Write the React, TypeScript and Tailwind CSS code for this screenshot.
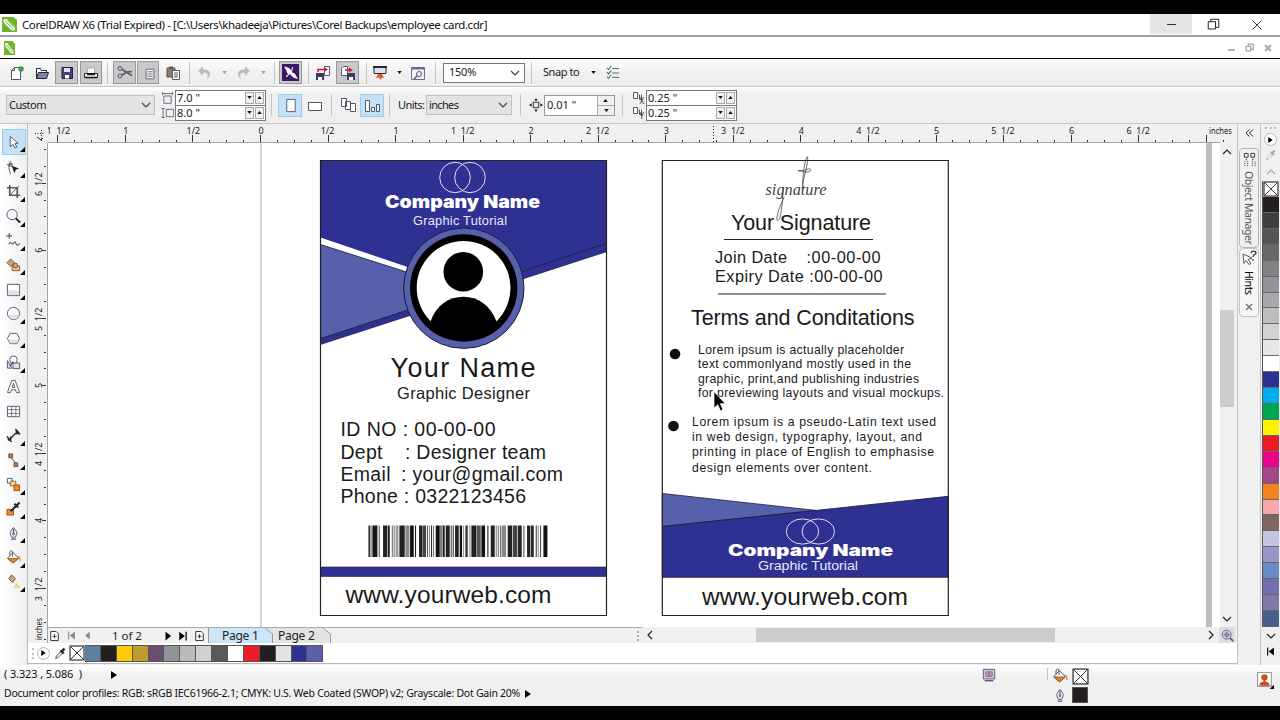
import React from 'react';

interface IconProps {
  children: React.ReactNode;
  className?: string;
}

const Icon: React.FC<IconProps> = ({ children, className = 'h-4 w-4' }) => (
  <svg viewBox="0 0 16 16" fill="none" stroke="#55556a" strokeWidth="1" className={`shrink-0 ${className}`}>
    {children}
  </svg>
);

const Cell: React.FC<IconProps> = ({ children, className = '' }) => (
  <div className={`flex h-[23px] shrink-0 items-center justify-center ${className}`}>{children}</div>
);

const Separator: React.FC<{ className?: string }> = ({ className = 'h-[22px]' }) => (
  <div className={`w-px shrink-0 bg-[#c4c4c4] ${className}`} />
);

const DropArrow: React.FC<{ color?: string }> = ({ color = '#111' }) => (
  <svg viewBox="0 0 6 4" className="h-[3px] w-[5px]">
    <path d="M0 0h6L3 4z" fill={color} />
  </svg>
);

const Chevron: React.FC<{ className?: string; color?: string }> = ({ className = '', color = '#444' }) => (
  <svg viewBox="0 0 10 10" className={`h-[10px] w-[10px] shrink-0 ${className}`}>
    <path d="M1 3l4 4 4-4" fill="none" stroke={color} strokeWidth="1.2" />
  </svg>
);

const CorelLogo: React.FC<{ className: string }> = ({ className }) => (
  <svg viewBox="0 0 16 16" preserveAspectRatio="none" className={className}>
    <path d="M0 0h12l4 3v13H0z" fill="#6cb52d" />
    <path d="M1.500 2l4 .5 8 8 .5 4-4-.5-8-8z" fill="#f1f9e8" />
    <path d="M3.500 4.500l8 8M5.500 3.500l7 7" stroke="#5c9d27" strokeWidth=".8" />
  </svg>
);

const PaintBucket = () => (
  <>
    <path d="M1.500 9l6-6.500 6 6.500-6 5z" fill="#fff" />
    <path d="M2 9h11l-5.500 4.700z" fill="#d9852c" stroke="#a96520" />
    <path d="M7 7V2c0-1.500-3-1.500-3 1v3" />
    <path d="M12.500 7c2 0 2.500 2 2.500 5" stroke="#e0983c" strokeWidth="1.500" />
  </>
);

const PenNib = () => (
  <>
    <path d="M8 1.500C6 4 4.500 6 4.500 8l1.500 4h4l1.500-4C11.500 6 10 4 8 1.500z" fill="#f4f4fb" />
    <path d="M8 3v5M5.500 14h5" strokeWidth="1.300" />
    <circle cx="8" cy="8.500" r="1" />
  </>
);

const Eyedropper: React.FC<{ color?: string }> = ({ color = '#26263c' }) => (
  <>
    <path d="M2 14l1-3 5-5 2 2-5 5z" stroke={color} fill="#fff" />
    <path d="M8 4l4 4M9 6l4-4" stroke={color} strokeWidth="3" />
  </>
);

const SpinPair = () => (
  <div className="flex gap-px pr-px">
    <span className="flex h-[12px] w-[9px] items-center justify-center border border-[#aaa] bg-[#f0f0f0]"><DropArrow /></span>
    <span className="flex h-[12px] w-[9px] rotate-180 items-center justify-center border border-[#aaa] bg-[#f0f0f0]"><DropArrow /></span>
  </div>
);

const DoubleInput: React.FC<{ top: string; bottom: string }> = ({ top, bottom }) => (
  <div className="flex h-[31px] w-[91px] shrink-0 flex-col border border-[#777] bg-white text-[11px]">
    <div className="flex flex-1 items-center justify-between border-b border-[#777] pl-px leading-none">{top}<SpinPair /></div>
    <div className="flex flex-1 items-center justify-between pl-px leading-none">{bottom}<SpinPair /></div>
  </div>
);

const CutGlyph = () => (
  <Icon>
    <circle cx="3" cy="3.500" r="2" />
    <circle cx="3" cy="11" r="2" />
    <path d="M5 4.500l10 6M5 10l5-3 5-.5" strokeWidth="1.600" />
  </Icon>
);

const TitleBar = () => (
  <div className="flex h-[23px] items-center border-b-2 border-[#a0a0a0] bg-white">
    <CorelLogo className="ml-[2px] h-[15px] w-[15px]" />
    <span className="ml-[5px] text-[11.500px] tracking-[-0.410px] whitespace-pre text-[#111]">
      {'CorelDRAW X6 (Trial Expired) - [C:\\Users\\khadeeja\\Pictures\\Corel Backups\\employee card.cdr]'}
    </span>
    <div className="ml-auto flex h-full items-center">
      <div className="flex h-[20px] w-[42px] items-center justify-center self-start bg-[#e5e5e5]"><span className="h-px w-[9px] bg-[#333]" /></div>
      <Icon className="ml-[15px] h-[13px] w-[13px]">
        <path d="M1.500 4.500h9v9h-9zM4.500 4.500v-3h10v10h-4" stroke="#222" strokeWidth="1.200" />
      </Icon>
      <Icon className="mr-[18px] ml-[32px] h-[10px] w-[10px]"><path d="M1 1l14 14M15 1L1 15" stroke="#222" strokeWidth="1.500" /></Icon>
    </div>
  </div>
);

const MenuBar = () => (
  <div className="flex h-[22px] items-center border-b border-black bg-white">
    <CorelLogo className="ml-[4px] h-[14px] w-[11px]" />
    <div className="mr-[8px] ml-auto flex items-center gap-[10px]">
      <span className="mt-[5px] h-[2px] w-[7px] bg-[#b5b5b5]" />
      <Icon className="h-[9px] w-[9px]"><path d="M2 6h8v8H2zM6 6V2h9v9h-5" stroke="#aaa" strokeWidth="2.500" /></Icon>
      <Icon className="h-[8px] w-[8px]"><path d="M2 2l12 12M14 2L2 14" stroke="#aaa" strokeWidth="4" /></Icon>
    </div>
  </div>
);

const StandardBar = () => (
  <div className="flex h-[28px] items-center border-b border-[#c8c8c8] bg-gradient-to-b from-white via-[#f0f0f0] to-[#eee] pl-[5px] text-[11px]">
    <Cell className="w-6">
      <Icon><path d="M2.500 5.500l3-3h6v12h-9zM2.500 5.500h3v-3" fill="#fff" /><circle cx="12" cy="4" r="2.800" fill="#3f9b4a" stroke="none" /></Icon>
    </Cell>
    <Cell className="ml-px w-6">
      <Icon><path d="M2.500 13.500v-10h4l1 2h5v2" fill="#fff" stroke="#23233a" /><path d="M2.500 13.500l2-6h10l-2 6z" fill="#7c84a8" stroke="#23233a" /></Icon>
    </Cell>
    <Cell className="ml-px w-[23px] border border-[#999] bg-[#c9c9c9]">
      <Icon><path d="M3 2.500h10.500v11H3z" fill="#43437a" stroke="#1e1e48" /><path d="M5 3h6v4H5z" fill="#dfe0f3" stroke="none" /><path d="M6 10h4v3.500H6z" fill="#fff" stroke="none" /></Icon>
    </Cell>
    <Cell className="ml-[2px] w-[22px] border border-[#999] bg-[#c9c9c9]">
      <Icon><path d="M4.500 3h7v6h-7z" fill="#fff" stroke="#aaa" /><path d="M1.500 8.500h13v4h-13z" fill="#fff" stroke="#222" /><path d="M2 12.500h12M4 9.500h8" stroke="#111" strokeWidth="1.500" /></Icon>
    </Cell>
    <Separator className="ml-[5px] h-[22px]" />
    <Cell className="ml-[5px] w-[23px] border border-[#999] bg-[#c9c9c9]"><CutGlyph /></Cell>
    <Cell className="ml-px w-[22px] border border-[#999] bg-[#c9c9c9]">
      <Icon className="mt-[3px] ml-[4px] h-[14px] w-[14px]"><path d="M3.500 2.500h9v11h-9z" fill="#fff" /><path d="M5 5.500h6M5 8h6M5 10.500h6" /></Icon>
    </Cell>
    <Cell className="ml-[3px] w-[22px]">
      <Icon><path d="M2 3h8v9H2z" fill="#8c7b67" stroke="#5c5148" /><path d="M4 2.500h4" strokeWidth="2" /><path d="M7.500 5.500h7v9h-7z" fill="#fff" /><path d="M9 8h4M9 10h4M9 12h4" /></Icon>
    </Cell>
    <Separator className="ml-[5px] h-[22px]" />
    <Cell className="ml-[4px] w-[22px]">
      <Icon><path d="M6 1L1 6l5 5V8c4-1 6 1 4 6 5-4 4-10-4-9.500z" fill="#bcbcbc" stroke="none" /></Icon>
    </Cell>
    <Cell className="ml-[3px] w-[10px]"><DropArrow color="#999" /></Cell>
    <Cell className="ml-[3px] w-[22px]">
      <Icon><path d="M10 1l5 5-5 5V8c-4-1-6 1-4 6-5-4-4-10 4-9.500z" fill="#bcbcbc" stroke="none" /></Icon>
    </Cell>
    <Cell className="ml-[4px] w-[10px]"><DropArrow color="#999" /></Cell>
    <Separator className="ml-[6px] h-[22px]" />
    <Cell className="ml-[4px] w-[23px] border border-[#999] bg-[#c9c9c9]">
      <Icon className="h-[17px] w-[17px]">
        <path d="M0 0h16v16H0z" fill="#3c1768" stroke="none" />
        <path d="M2 2l5 2 3 4-1 2-4-1-1-3zM9 8l3 1 3 5-4-1-3-3z" fill="#fff" stroke="none" />
        <path d="M10 3l-1 4M4 12l3-3" stroke="#fff" />
      </Icon>
    </Cell>
    <Separator className="ml-[6px] h-[22px]" />
    <Cell className="ml-[3px] w-[22px]">
      <Icon><path d="M9.500 1.500h5v9h-5z" fill="#fff" /><path d="M1 8h8v7H1z" fill="#3b3b68" stroke="none" /><path d="M3 12h4v3H3z" fill="#fff" stroke="none" /><path d="M3 7V4.500h7" stroke="#c3222b" strokeWidth="1.500" /><path d="M9 2l4 2.500L9 7z" fill="#c3222b" stroke="none" /></Icon>
    </Cell>
    <Cell className="ml-[2px] w-[23px] border border-[#999] bg-[#c9c9c9]">
      <Icon><path d="M1.500 3.500l2-2h4v9h-6z" fill="#fff" /><path d="M7 8h8v7H7z" fill="#3b3b68" stroke="none" /><path d="M9 12h4v3H9z" fill="#fff" stroke="none" /><path d="M5 5h6" stroke="#c3222b" strokeWidth="1.500" /><path d="M9 2.500l4 2.500-4 2.500z" fill="#c3222b" stroke="none" /></Icon>
    </Cell>
    <Separator className="ml-[7px] h-[22px]" />
    <Cell className="ml-[2px] w-[22px]">
      <Icon><path d="M2 1.500h12v7H2z" fill="#dfe3f0" stroke="#26263c" /><path d="M1 2h14" stroke="#26263c" strokeWidth="2" /><path d="M6 9h4l2 4-2-.5-1.500 2.500L7 12.500 4 13z" fill="#e4572c" stroke="none" /></Icon>
    </Cell>
    <Cell className="ml-[3px] w-[10px]"><DropArrow /></Cell>
    <Cell className="ml-[3px] w-[22px]">
      <Icon><path d="M1.500 2.500h13v12h-13z" fill="#eef0fa" stroke="#6b6b95" /><path d="M1.500 3.500h13" stroke="#6b6b95" strokeWidth="2" /><circle cx="9" cy="9" r="2.500" /><path d="M7 11l-3 3" strokeWidth="1.500" /></Icon>
    </Cell>
    <Separator className="ml-[6px] h-[22px]" />
    <div className="ml-[7px] flex h-[20px] w-[82px] shrink-0 items-center justify-between border border-[#777] bg-white pr-[4px] pl-[5px] tracking-[-0.250px]">
      150%<Chevron />
    </div>
    <Separator className="ml-[6px] h-[22px]" />
    <span className="ml-[11px] w-[36px] shrink-0 tracking-[-0.450px] whitespace-nowrap">Snap to</span>
    <Cell className="ml-[9px] w-[10px]"><DropArrow /></Cell>
    <Cell className="ml-[4px] w-[22px]">
      <Icon className="h-[14px] w-[14px]"><path d="M7 3h8M7 8h8M7 13h8" /><path d="M1 2l2 2 3-4M1 7l2 2 3-4M1 12l2 2 3-4" stroke="#3c7a46" strokeWidth="1.200" /></Icon>
    </Cell>
  </div>
);

const OffsetGlyph: React.FC<{ axis: string }> = ({ axis }) => (
  <svg viewBox="0 0 13 14" className="h-[14px] w-[13px]">
    <path d="M1.500 1.500h4v6h-4zM7.500 3.500v5h2v-5" fill="#fff" stroke="#55556a" />
    <text x="7.500" y="13" fontSize="8" fill="#222">{axis}</text>
  </svg>
);

const PropertyBar = () => (
  <div className="flex h-[37px] items-center border-b border-[#c8c8c8] bg-gradient-to-b from-white via-[#f0f0f0] via-20% to-[#eee] pl-[6px] text-[11px]">
    <div className="flex h-[20px] w-[149px] shrink-0 items-center justify-between border border-[#c0c0c0] bg-[#e3e3e3] pr-[3px] pl-[2px] tracking-[-0.500px]">Custom<Chevron /></div>
    <div className="ml-[6px] flex w-[13px] shrink-0 flex-col gap-px">
      <Icon className="h-[14px] w-[13px]"><path d="M3.500 5.500h9v9h-9zM2 2.500h12M2 .500v4M14 .500v4" /></Icon>
      <Icon className="h-[14px] w-[13px]"><path d="M6.500 3.500h9v9h-9zM2.500 2v12M.500 2.500h4M.500 13.500h4" /></Icon>
    </div>
    <div className="ml-px"><DoubleInput top={'7.0 "'} bottom={'8.0 "'} /></div>
    <Separator className="ml-[5px] h-[22px]" />
    <Cell className="ml-[6px] w-[24px] border border-[#9dcbea] bg-[#c5e1f5]"><Icon className="h-[15px] w-[15px]"><path d="M4 1.500h9v13H4z" fill="#fff" /></Icon></Cell>
    <Cell className="ml-[2px] w-[22px]"><Icon><path d="M1.500 5.500h13v8h-13z" fill="#fff" /></Icon></Cell>
    <Separator className="ml-[5px] h-[22px]" />
    <Cell className="ml-[5px] w-[22px]"><Icon><path d="M1.500 1.500h5v8h-5zM5.500 4.500h5v8h-5zM10.500 6.500h5v8h-5z" fill="#fff" /></Icon></Cell>
    <Cell className="ml-px w-[24px] border border-[#9dcbea] bg-[#c5e1f5]"><Icon><path d="M1.500 3.500h4v11h-4zM7.500 10.500h3v4h-3zM12.500 7.500h3v7h-3z" fill="#fff" /></Icon></Cell>
    <Separator className="ml-[5px] h-[22px]" />
    <span className="ml-[8px] w-[28px] shrink-0 tracking-[-0.600px]">Units:</span>
    <div className="flex h-[20px] w-[86px] shrink-0 items-center justify-between border border-[#c0c0c0] bg-[#e3e3e3] pr-[3px] pl-[2px] tracking-[-0.650px]">inches<Chevron /></div>
    <Separator className="ml-[8px] h-[22px]" />
    <Cell className="ml-[7px] w-[16px]">
      <Icon className="h-[14px] w-[14px]"><path d="M5 5h6v6H5z" strokeWidth="1.500" /><path d="M8 0l2 3H6zM8 16l2-3H6zM0 8l3-2v4zM16 8l-3-2v4z" fill="#222" stroke="none" /></Icon>
    </Cell>
    <div className="flex h-[21px] w-[71px] shrink-0 items-center justify-between border border-[#999] bg-white pl-[2px]">
      <span className="whitespace-pre">{'0.01 "'}</span>
      <div className="flex h-full w-[17px] flex-col border-l border-[#aaa] bg-[#f0f0f0]">
        <span className="flex flex-1 rotate-180 items-center justify-center border-t border-[#aaa]"><DropArrow /></span>
        <span className="flex flex-1 items-center justify-center"><DropArrow /></span>
      </div>
    </div>
    <Separator className="ml-[7px] h-[22px]" />
    <div className="ml-[9px] flex shrink-0 flex-col gap-px"><OffsetGlyph axis="X" /><OffsetGlyph axis="Y" /></div>
    <div className="ml-px"><DoubleInput top={'0.25 "'} bottom={'0.25 "'} /></div>
  </div>
);

interface Tool {
  flyout: boolean;
  art: React.ReactNode;
}

const tools: Tool[] = [
  { flyout: true, art: <path d="M4.500 1.500v11l3-2.500 2 4 2-1-2-4h3.500z" fill="#fff" /> },
  { flyout: true, art: <><path d="M5 1C2 5 3 11 5 15M1 5h5M3.500 3.500h3v3h-3z" fill="#fff" /><path d="M6 6l8 3-3.500 1.500L9 14z" fill="#222" stroke="none" /></> },
  { flyout: true, art: <><path d="M4 1v11h11M1 4h11v11" strokeWidth="1.800" /><path d="M4 12L14 2" /></> },
  { flyout: true, art: <><circle cx="6.500" cy="6" r="5.500" fill="#f4f5fb" /><path d="M10.500 10l4.500 4.500" stroke="#222" strokeWidth="2.200" /></> },
  { flyout: true, art: <path d="M3.500 0v6M.500 3h6M3 12c2-5 3 2 5-1s2-1 3 1 2 1 4-1" strokeWidth="1.200" /> },
  { flyout: true, art: <><path d="M1 5l4-4 4 4-4 4z" fill="#d9a45f" /><path d="M6.500 8.500h8v5h-8z" fill="#efc48b" stroke="#8a5a25" /><circle cx="10" cy="8" r="2.500" fill="#d9a45f" /></> },
  { flyout: true, art: <><path d="M1.500 2.500h13v12h-13z" fill="#fff" /><path d="M2 9h12v5H2z" fill="#e0e1ec" stroke="none" /></> },
  { flyout: true, art: <><circle cx="8" cy="8" r="6.500" fill="#fff" /><path d="M2.500 9h11c-1 7-10 7-11 0z" fill="#e0e1ec" stroke="none" /></> },
  { flyout: true, art: <><path d="M1.500 8L4.500 2.500h7L14.500 8l-3 5.500h-7z" fill="#fff" /><path d="M2.500 9h11l-2 4h-7z" fill="#e0e1ec" stroke="none" /></> },
  { flyout: true, art: <><path d="M1.500 6v8h5zM7.500 8.500h7v6h-7z" fill="#e0e1ec" /><circle cx="8" cy="5" r="4" fill="#fff" /><path d="M4 12l4-5" strokeWidth="1.500" /></> },
  { flyout: false, art: <path d="M1.500 14.500L6.200 1.500h3.600l4.700 13h-3.300l-1-3H5.700l-1 3zM6.500 9h3L8 4.500z" fill="#fff" fillRule="evenodd" /> },
  { flyout: false, art: <><path d="M1.500 2.500h13v11h-13z" fill="#fff" /><path d="M1.500 6h13M1.500 10h13M6 2.500v11M10.500 2.500v11" strokeWidth=".8" /></> },
  { flyout: true, art: <path d="M3 13L13 3M1 9l5 6M10 1l5 6M2 12l1 1M5 9v3h-3M11 3v3h3" stroke="#26263c" strokeWidth="1.500" /> },
  { flyout: true, art: <><path d="M5 4l6 8" /><path d="M3 1h4v4H3zM8.500 10.500h4v4h-4z" fill="#c47a45" stroke="#7a4722" /></> },
  { flyout: true, art: <><path d="M1.500 1.500h5v5h-5z" fill="#fff" /><path d="M4.500 4.500h6v5h-6z" fill="#f3cf93" stroke="#8a6a35" /><path d="M8.500 8.500h6v6h-6z" fill="#f08a24" stroke="#a2530c" /></> },
  { flyout: true, art: <><path d="M1 9h7v6H1z" fill="#f08a24" stroke="#a2530c" /><path d="M5 11l7-7M9 3l4 4M10.500 5.500l4-4" stroke="#26263c" strokeWidth="2.300" /></> },
  { flyout: true, art: <PenNib /> },
  { flyout: true, art: <PaintBucket /> },
  { flyout: true, art: <><path d="M3 5l3-4 4 4-3 4z" fill="#d9a45f" /><path d="M9 13l2-4 4 4v2H8z" fill="#f5d98a" stroke="none" /></> },
];

const Toolbox = () => (
  <div className="w-7 shrink-0 border-r border-[#bbb] bg-gradient-to-r from-white to-[#efefef] pt-[5px]">
    <div className="flex h-[465px] flex-col">
      {tools.map((tool, i) => (
        <div
          key={i}
          className={`ml-[2px] flex w-6 flex-1 items-center justify-center ${i === 0 ? 'border border-[#9dcbea] bg-[#c5e1f5]' : ''}`}
        >
          <Icon className="ml-[3px] h-[15px] w-[15px]">{tool.art}</Icon>
          <svg viewBox="0 0 4 4" className="mb-[2px] -ml-px h-[5px] w-[5px] self-end">
            {tool.flyout && <path d="M4 0v4H0z" fill="#000" />}
          </svg>
        </div>
      ))}
    </div>
  </div>
);

const INCH = 135.1;
const ORIGIN_X = 261;
const ORIGIN_Y = 1060.8;

const horizontalLabels = [
  { at: -1.5, text: '1  1/2' },
  { at: -1, text: '1' },
  { at: -0.5, text: '1/2' },
  { at: 0, text: '0' },
  { at: 0.5, text: '1/2' },
  { at: 1, text: '1' },
  { at: 1.5, text: '1  1/2' },
  { at: 2, text: '2' },
  { at: 2.5, text: '2  1/2' },
  { at: 3, text: '3' },
  { at: 3.5, text: '3  1/2' },
  { at: 4, text: '4' },
  { at: 4.5, text: '4  1/2' },
  { at: 5, text: '5' },
  { at: 5.5, text: '5  1/2' },
  { at: 6, text: '6' },
  { at: 6.5, text: '6  1/2' },
];

const verticalLabels = [
  { at: 6.5, text: '6  1/2' },
  { at: 6, text: '6' },
  { at: 5.5, text: '5  1/2' },
  { at: 5, text: '5' },
  { at: 4.5, text: '4  1/2' },
  { at: 4, text: '4' },
  { at: 3.5, text: '3  1/2' },
];

const HorizontalRuler = () => {
  const ticks = Array.from({ length: 70 }, (_, i) => i - 12);
  return (
    <svg viewBox="48 124 1188 19" className="block h-[19px] w-[1188px] bg-[#f0f0f0]">
      {ticks.map((t) => (
        <path key={t} d={`M${Math.round(ORIGIN_X + (t * INCH) / 8) - 0.5} ${t % 4 === 0 ? 135 : 140}V142`} stroke="#333" />
      ))}
      <path d="M48 142.500h1172" stroke="#a5a5a5" />
      <path d="M713.500 126v16" stroke="#222" strokeDasharray="1 2" />
      {horizontalLabels.map((l) => (
        <text key={l.at} x={ORIGIN_X + l.at * INCH - (l.at > 0 && l.at % 1 ? 1 : 0)} y="134" textAnchor="middle" fontSize="9" fill="#222" className="whitespace-pre">{l.text}</text>
      ))}
      <text x="1209" y="134" fontSize="8.500" textLength="23" lengthAdjust="spacingAndGlyphs" fill="#222">inches</text>
    </svg>
  );
};

const VerticalRuler = () => {
  const ticks = Array.from({ length: 30 }, (_, i) => 25 + i);
  return (
    <svg viewBox="28 124 20 519" className="block h-[519px] w-5 shrink-0 bg-[#f0f0f0]">
      {ticks.map((t) => (
        <path key={t} d={`M${t % 4 === 0 ? 42 : 44} ${Math.round(ORIGIN_Y - (t * INCH) / 8) + 0.5}H46`} stroke="#333" />
      ))}
      <path d="M47.500 143v500" stroke="#a5a5a5" />
      <path d="M35 133.500h9M41.500 130v12" stroke="#222" strokeDasharray="1 1.500" />
      <path d="M37 137l4 3 2-2" stroke="#222" fill="none" />
      {verticalLabels.map((l) => (
        <text
          key={l.at}
          transform={`translate(41.500 ${ORIGIN_Y - l.at * INCH + (l.at % 1 ? 1.5 : 0)}) rotate(-90)`}
          textAnchor="middle"
          fontSize="9"
          fill="#222"
          className="whitespace-pre"
        >
          {l.text}
        </text>
      ))}
      <text transform="translate(41.500 640) rotate(-90)" fontSize="8.500" textLength="22" lengthAdjust="spacingAndGlyphs" fill="#222">inches</text>
    </svg>
  );
};

interface LineProps {
  x: number;
  y: number;
  w: number;
  size: number;
  children: string;
  fill?: string;
}

const Line: React.FC<LineProps> = ({ x, y, w, size, children, fill = '#1a1a1a' }) => (
  <text x={x} y={y} textLength={w} lengthAdjust="spacing" fontSize={size} fill={fill}>
    {children}
  </text>
);

const BrandName: React.FC<Omit<LineProps, 'children' | 'fill'>> = ({ x, y, w, size }) => (
  <text x={x} y={y} textLength={w} lengthAdjust="spacingAndGlyphs" fontSize={size} fontWeight={900} fontFamily="Inter, 'DejaVu Sans', sans-serif" fill="#fff">
    Company Name
  </text>
);

// [offset, width, shade] at three units per pixel
const bars: [number, number, string][] = [
  [0, 6, '#333'], [8, 2, '#777'], [12, 15, '#161616'], [31, 3, '#444'], [44, 13, '#222'], [59, 5, '#111'],
  [70, 5, '#888'], [77, 4, '#999'], [83, 7, '#999'], [93, 16, '#222'], [111, 12, '#888'], [125, 11, '#111'],
  [140, 3, '#111'], [152, 9, '#222'], [162, 11, '#444'], [176, 3, '#555'], [182, 2, '#555'], [188, 3, '#222'],
  [195, 2, '#222'], [202, 12, '#111'], [215, 7, '#777'], [223, 6, '#222'], [232, 12, '#222'], [247, 3, '#444'],
  [253, 3, '#222'], [260, 11, '#222'], [274, 7, '#111'], [285, 2, '#555'], [291, 7, '#333'], [303, 3, '#777'],
  [309, 14, '#222'], [324, 13, '#555'], [339, 11, '#111'], [357, 3, '#111'], [367, 12, '#222'], [382, 3, '#777'],
  [388, 4, '#888'], [395, 4, '#666'], [401, 12, '#888'], [418, 13, '#222'], [433, 14, '#444'], [449, 11, '#222'],
  [465, 3, '#444'], [476, 10, '#222'], [488, 8, '#222'], [502, 3, '#333'], [508, 3, '#888'], [515, 3, '#444'],
  [525, 12, '#111'],
];

const FrontCard = () => (
  <g>
    <path d="M320.500 160.500h286v455h-286z" fill="#fff" />
    <path d="M320.500 338.500L606.500 243.300v8.400L320.500 344.500z" fill="#2e3192" stroke="#1b1c3c" strokeWidth=".7" />
    <path d="M320.500 160.500h286v82.800L464 291 320.500 237.500z" fill="#2e3192" stroke="#1b1c3c" strokeWidth=".8" />
    <path d="M320.500 237.500L440 278v5L320.500 244.500z" fill="#fff" />
    <path d="M320.500 244.500L460 289v4L320.500 338.500z" fill="#5760ab" stroke="#1b1c3c" strokeWidth=".8" />
    <circle cx="463.800" cy="288.200" r="60.200" fill="#5760ab" stroke="#1b1c3c" strokeWidth="1" />
    <circle cx="463.700" cy="288" r="53.700" fill="#000" />
    <circle cx="463.600" cy="287.800" r="46.900" fill="#fff" />
    <circle cx="463.300" cy="271.800" r="19.800" fill="#000" />
    <path d="M430.500 321.500C436 305 449 296.700 463.300 296.700S490.500 305 496.500 321.500L496 326A50 50 0 0 1 431 326z" fill="#000" />
    <ellipse cx="455" cy="177.500" rx="15.300" ry="15.200" fill="none" stroke="#dfe0f5" />
    <ellipse cx="470" cy="177.500" rx="15.300" ry="15.200" fill="none" stroke="#dfe0f5" />
    <BrandName x={385} y={208} w={155} size={17.300} />
    <Line x={413} y={225.300} w={94} size={12.800} fill="#e8e8fa">Graphic Tutorial</Line>
    <Line x={390.500} y={376.500} w={145} size={27}>Your Name</Line>
    <Line x={397} y={398.500} w={133} size={16.500}>Graphic Designer</Line>
    <Line x={340.500} y={436} w={155} size={19.500}>ID NO : 00-00-00</Line>
    <Line x={340.500} y={458.600} w={42} size={19.500}>Dept</Line>
    <Line x={405} y={458.600} w={141} size={19.500}>: Designer team</Line>
    <Line x={340.500} y={480.800} w={50} size={19.500}>Email</Line>
    <Line x={401} y={480.800} w={162} size={19.500}>: your@gmail.com</Line>
    <Line x={340.500} y={503.300} w={185.500} size={19.500}>Phone : 0322123456</Line>
    {bars.map(([x, w, shade]) => (
      <path key={x} d={`M${368.4 + x / 3} 525.500h${w / 3}v31.500h-${w / 3}z`} fill={shade} />
    ))}
    <path d="M320.500 567h286v9.500h-286z" fill="#2e3192" stroke="#1b1c3c" strokeWidth=".6" />
    <Line x={345.500} y={602.900} w={206} size={24.500}>www.yourweb.com</Line>
    <path d="M320.500 160.500h286v455h-286z" fill="none" stroke="#222" strokeWidth="1.200" />
  </g>
);

const terms = [
  { x: 698, y: 353.8, w: 206, text: 'Lorem ipsum is actually placeholder' },
  { x: 698, y: 368.3, w: 213, text: 'text commonlyand mostly used in the' },
  { x: 698, y: 382.8, w: 221, text: 'graphic, print,and publishing industries' },
  { x: 698, y: 397.3, w: 246, text: 'for previewing layouts and visual mockups.' },
  { x: 692, y: 426.4, w: 244, text: 'Lorem ipsum is a pseudo-Latin text used' },
  { x: 692, y: 441.2, w: 230, text: 'in web design, typography, layout, and' },
  { x: 692, y: 456.3, w: 242, text: 'printing in place of English to emphasise' },
  { x: 692, y: 471.5, w: 180, text: 'design elements over content.' },
];

const BackCard = () => (
  <g>
    <path d="M662.300 160.500h286v455h-286z" fill="#fff" />
    <text x="765.500" y="194.500" fontSize="17.500" fontStyle="italic" textLength="61" lengthAdjust="spacingAndGlyphs" fill="#444" fontFamily="'Liberation Serif', serif">signature</text>
    <path d="M802.500 192c0-12 1-26 4-34.500 1-2 1.500 0 1 4-1 9-4 16-5 24M798 171c3-2 5 2 9 1 5 0 5-4 1-3-3 1-4 2-10 2M783 187c0 10-1 22-3 30-1 5-4 4-3 0 1-8 5-14 7-20" fill="none" stroke="#444" strokeWidth=".8" />
    <Line x={731} y={229.600} w={140} size={21.500}>Your Signature</Line>
    <path d="M724 239.500h149M718 294h168" stroke="#222" strokeWidth="1.100" />
    <Line x={715} y={262.500} w={72} size={16.300}>Join Date</Line>
    <Line x={806.500} y={262.500} w={74} size={16.300}>:00-00-00</Line>
    <Line x={715} y={281.800} w={167.500} size={16.300}>Expiry Date :00-00-00</Line>
    <Line x={691} y={324.500} w={223.500} size={21.500}>Terms and Conditations</Line>
    <circle cx="675" cy="354" r="5.300" fill="#111" />
    <circle cx="673.500" cy="426" r="5.300" fill="#111" />
    {terms.map((t) => (
      <Line key={t.y} x={t.x} y={t.y} w={t.w} size={12.200}>{t.text}</Line>
    ))}
    <path d="M662.300 493.500L817 510.500 662.300 526.500z" fill="#5760ab" stroke="#1b1c3c" strokeWidth=".8" />
    <path d="M662.300 526.500L815 510.500 948.300 496.300V577.300h-286z" fill="#2e3192" stroke="#1b1c3c" strokeWidth=".8" />
    <ellipse cx="802.500" cy="531.500" rx="16.200" ry="12.600" fill="none" stroke="#dfe0f5" />
    <ellipse cx="818.300" cy="531.500" rx="16.200" ry="12.600" fill="none" stroke="#dfe0f5" />
    <BrandName x={728} y={556.200} w={165} size={15.300} />
    <text x="758" y="570.300" textLength="100" lengthAdjust="spacingAndGlyphs" fontSize="12" fill="#e8e8fa">Graphic Tutorial</text>
    <Line x={702} y={604.800} w={206} size={24.500}>www.yourweb.com</Line>
    <path d="M662.300 160.500h286v455h-286z" fill="none" stroke="#222" strokeWidth="1.200" />
  </g>
);

const Artboard = () => (
  <svg viewBox="48 143 1172 484" className="block h-[484px] w-[1172px] bg-white" fontFamily="'Liberation Sans', Arial, sans-serif">
    <path d="M261 143v484" stroke="#bdbdbd" strokeWidth="1.300" />
    <path d="M1206 143h6v484h-6z" fill="#bfbfbf" />
    <FrontCard />
    <BackCard />
    <path d="M714 391.500v16.500l3.800-3.300 2.700 6 2.500-1.200-2.700-5.800h5z" fill="#000" stroke="#fff" strokeWidth=".7" />
  </svg>
);

const AddPage = () => (
  <Icon className="h-[12px] w-[11px]"><path d="M2.500 1.500h8l3 3v10h-11zM8 5.500v6M5 8.500h6" stroke="#222" strokeWidth="1.300" fill="#fff" /></Icon>
);

const PageNav = () => (
  <div className="flex h-[16px] items-center bg-[#f0f0f0] text-[12px] text-[#222]">
    <div className="flex h-full w-[594px] items-center border-t border-[#aaa]">
      <span className="ml-px"><AddPage /></span>
      <Icon className="ml-[7px] h-[9px] w-[9px]"><path d="M3 1v14" stroke="#888" strokeWidth="2" /><path d="M14 1v14L5 8z" fill="#888" stroke="none" /></Icon>
      <Icon className="ml-[7px] h-[9px] w-[9px]"><path d="M12 1v14L4 8z" fill="#888" stroke="none" /></Icon>
      <span className="ml-[20px] w-[32px] text-[11.500px] tracking-[-0.050px] whitespace-nowrap">1 of 2</span>
      <Icon className="ml-[19px] h-[10px] w-[10px]"><path d="M4 1v14l9-7z" fill="#000" stroke="none" /></Icon>
      <Icon className="ml-[5px] h-[10px] w-[10px]"><path d="M13 1v14" stroke="#000" strokeWidth="2" /><path d="M2 1v14l9-7z" fill="#000" stroke="none" /></Icon>
      <span className="ml-[6px]"><AddPage /></span>
      <div className="ml-[3px] flex h-full w-[57px] items-center border-l border-[#999] bg-[#cce6f8] pl-[13px] tracking-[-0.250px] whitespace-nowrap">Page 1</div>
      <svg viewBox="0 0 8 15" preserveAspectRatio="none" className="h-full w-[8px] bg-[#e4e4e4]"><path d="M0 0l8 6v9H0z" fill="#cce6f8" /><path d="M0 0l7.500 6v9" fill="none" stroke="#999" /></svg>
      <div className="flex h-full w-[50px] items-center bg-[#e4e4e4] pl-[5px] tracking-[-0.250px] whitespace-nowrap">Page 2</div>
      <svg viewBox="0 0 8 15" preserveAspectRatio="none" className="h-full w-[8px]"><path d="M0 0l8 6v9H0z" fill="#e4e4e4" /><path d="M0 0l7.500 6v9" fill="none" stroke="#999" /></svg>
      <span className="mr-[3px] ml-auto h-[10px] border-l-2 border-dotted border-[#aaa]" />
    </div>
    <Chevron className="ml-[3px] rotate-90" color="#222" />
    <div className="ml-[101px] h-[14px] w-[299px] bg-[#cdcdcd]" />
    <Chevron className="ml-[151px] -rotate-90" color="#222" />
    <div className="ml-[3px] flex h-full w-[16px] items-center justify-center bg-[#dcdce6]">
      <Icon className="h-[13px] w-[13px]"><circle cx="7" cy="7" r="5.500" /><circle cx="7" cy="7" r="2.500" /><path d="M7 2v10M2 7h10" strokeWidth=".7" /><path d="M11 11l4 4" strokeWidth="2" /></Icon>
    </div>
  </div>
);

const documentColors = [
  '#5f7ea0', '#231f20', '#ffcb08', '#be9c2e', '#6b4d70', '#919396', '#b9bbbd',
  '#cfd1d3', '#58595b', '#ffffff', '#ed1c24', '#231f20', '#e2e3e4', '#2e3192', '#585fab',
];

const NoColor: React.FC<{ className: string }> = ({ className }) => (
  <svg viewBox="0 0 16 16" className={`shrink-0 ${className}`}>
    <rect x="1" y="1" width="14" height="14" fill="#fff" stroke="#222" strokeWidth="1.100" />
    <path d="M2 2l12 12M14 2L2 14" stroke="#222" strokeWidth=".9" />
  </svg>
);

const PlayButton = () => (
  <span className="flex h-[13px] w-[13px] items-center justify-center rounded-full border border-[#b5b5b5] bg-white">
    <svg viewBox="0 0 6 8" className="h-[6px] w-[5px]"><path d="M0 0l6 4-6 4z" fill="#000" /></svg>
  </span>
);

const DocumentPalette = () => (
  <div className="flex h-[21px] items-center border-b border-[#b8b8b8] bg-white">
    <span className="ml-[4px] h-[11px] border-l-2 border-dotted border-[#bbb]" />
    <span className="ml-[3px]"><PlayButton /></span>
    <Icon className="ml-[4px] h-[13px] w-[13px]"><Eyedropper /></Icon>
    <NoColor className="ml-[2px] h-[16px] w-[16px]" />
    <div className="flex">
      {documentColors.map((c, i) => (
        <span key={i} className="h-[17px] w-[15.9px] border-y border-r border-[#555]" style={{ backgroundColor: c }} />
      ))}
    </div>
  </div>
);

const VerticalScroll = () => (
  <div className="flex h-[484px] w-[17px] flex-col items-center bg-[#f0f0f0] pr-[3px]">
    <Chevron className="mt-[4px] rotate-180" color="#222" />
    <div className="mt-[153px] h-[97px] w-[14px] bg-[#cdcdcd]" />
    <Chevron className="mt-auto mb-[3px]" color="#222" />
  </div>
);

const Dockers = () => (
  <div className="flex w-[24px] shrink-0 flex-col items-center border-x border-[#c4c4c4] bg-[#f0f0f0]">
    <svg viewBox="0 0 10 8" className="mt-[5px] h-[8px] w-[9px]"><path d="M5 0L1 4l4 4M9 0L5 4l4 4" fill="none" stroke="#222" strokeWidth="1.100" /></svg>
    <div className="mt-[11px] flex h-[100px] w-[20px] flex-col items-center rounded border border-[#b5b5b5] pt-[3px] text-[#555]">
      <Icon className="h-[15px] w-[15px] rotate-90"><path d="M1.500 2.500h4v4h-4zM1.500 9.500h4v4h-4zM7 4.500h2M7 11.500h2" stroke="#333" /><path d="M10 2h5M10 5h5M10 10h5M10 13h5" strokeDasharray="1 1" stroke="#333" /></Icon>
      <span className="mt-[4px] text-[10.500px] leading-none tracking-[-0.420px] whitespace-nowrap [writing-mode:vertical-rl]">Object Manager</span>
    </div>
    <div className="flex h-[69px] w-[20px] flex-col items-center rounded border border-[#c4c4c4] bg-[#f7f7f7] pt-[1px]">
      <Icon className="h-[16px] w-[16px]"><path d="M2 4l9 4-4 1.500 3 4-2 1-3-4-2 3z" fill="#fff" /><path d="M10 3c1-3 5-2 5 0s-3 1-3 4M12 9v1.500" stroke="#333" strokeWidth="1.300" /></Icon>
      <span className="mt-[5px] text-[10.500px] leading-none tracking-[-0.450px] text-black [writing-mode:vertical-rl]">Hints</span>
      <Icon className="mt-[8px] h-[8px] w-[8px]"><path d="M2 2l12 12M14 2L2 14" stroke="#777" strokeWidth="3" /></Icon>
    </div>
  </div>
);

const swatches = [
  '#231f20', '#3e3e40', '#555557', '#69696b', '#808284', '#929497', '#a6a8ab', '#bbbdbf',
  '#d0d2d3', '#e6e7e8', '#ffffff', '#2e3192', '#00aeef', '#00a651', '#fff200', '#ed1c24',
  '#ec008c', '#a54686', '#f58220', '#f9a8ae', '#7f675e', '#c6c3e3', '#9896c8', '#6a8ac8',
  '#746eb0', '#817aa8', '#456189',
];

const ColorPalette = () => (
  <div className="flex flex-1 flex-col items-center bg-[#f0f0f0]">
    <span className="mt-[3px] w-[11px] border-t-2 border-dotted border-[#bbb]" />
    <span className="mt-[4px]"><PlayButton /></span>
    <Icon className="mt-[3px] h-[12px] w-[12px]"><Eyedropper color="#aaa" /></Icon>
    <Chevron className="mt-[6px] rotate-180" color="#aaa" />
    <div className="mt-[4px] flex h-[446px] w-[17px] flex-col border-l border-[#555]">
      <NoColor className="h-4 w-4" />
      {swatches.map((c, i) => (
        <span key={i} className="w-full flex-1 border-b border-[#66666a]" style={{ backgroundColor: c }} />
      ))}
    </div>
    <Chevron className="mt-[4px]" color="#222" />
    <Icon className="mt-[6px] h-[9px] w-[9px]"><path d="M3 1v14" stroke="#000" strokeWidth="2" /><path d="M14 1v14L5 8z" fill="#000" stroke="none" /></Icon>
  </div>
);

const StatusBar = () => (
  <div className="flex h-[41px] justify-between bg-gradient-to-b from-white via-[#f0f0f0] via-30% to-[#f0f0f0] pl-[4px] text-[11px] text-[#111]">
    <div className="flex w-[940px] flex-col">
      <div className="flex h-[19px] items-center whitespace-pre">
        <span className="w-[107px] tracking-[-0.120px]">{'( 3.323 , 5.086  )'}</span>
        <svg viewBox="0 0 6 8" className="h-[8px] w-[6px]"><path d="M0 0l6 4-6 4z" fill="#000" /></svg>
      </div>
      <div className="flex h-[20px] items-center whitespace-pre">
        <span className="w-[521px] text-[10.500px] tracking-[-0.260px]">
          Document color profiles: RGB: sRGB IEC61966-2.1; CMYK: U.S. Web Coated (SWOP) v2; Grayscale: Dot Gain 20%
        </span>
        <svg viewBox="0 0 6 8" className="h-[8px] w-[6px]"><path d="M0 0l6 4-6 4z" fill="#000" /></svg>
      </div>
    </div>
    <div className="flex flex-1 pt-[3px]">
      <Icon className="ml-[38px] h-[14px] w-[14px]"><path d="M1.500 1.500h13v11h-13z" fill="#c5c9ea" /><path d="M4.500 4.500h7v5h-7z" fill="#e9c3cb" stroke="#8c4a66" /><circle cx="8" cy="7" r="1.500" /><path d="M3 14.500h10" strokeWidth="1.500" /></Icon>
      <Separator className="ml-[51px] h-[12px]" />
      <div className="ml-[4px] flex flex-col gap-[4px]">
        <Icon><PaintBucket /></Icon>
        <Icon className="h-[15px] w-4"><PenNib /></Icon>
      </div>
      <div className="ml-[4px] flex flex-col gap-[2px]">
        <NoColor className="h-[17px] w-[17px]" />
        <span className="h-[16px] w-[16px] border border-[#555] bg-[#231f20]" />
      </div>
      <div className="mr-[6px] ml-auto pt-[4px]">
        <Icon className="h-[17px] w-[17px]"><path d="M.500.500h13v13H.500z" fill="#fff" stroke="#999" /><circle cx="7" cy="5" r="3" fill="#c8501e" stroke="none" /><path d="M2 13l1-3 3-1V7h2v2l3 1 1 3z" fill="#c8501e" stroke="none" /><path d="M16 12v4h-4z" fill="#000" stroke="none" /></Icon>
      </div>
    </div>
  </div>
);

const App: React.FC = () => (
  <div className="flex h-[720px] w-[1280px] flex-col overflow-hidden bg-black pt-[14px] font-['Noto_Sans','Open_Sans',sans-serif] text-[#1a1a1a]">
    <TitleBar />
    <MenuBar />
    <StandardBar />
    <PropertyBar />
    <div className="flex h-[541px] shrink-0 bg-[#f0f0f0]">
      <Toolbox />
      <div className="flex w-[1209px] shrink-0 flex-col">
        <div className="flex">
          <VerticalRuler />
          <div className="w-[1189px]">
            <HorizontalRuler />
            <div className="flex">
              <Artboard />
              <VerticalScroll />
            </div>
            <PageNav />
          </div>
        </div>
        <DocumentPalette />
      </div>
      <Dockers />
      <ColorPalette />
    </div>
    <StatusBar />
  </div>
);

export default App;
